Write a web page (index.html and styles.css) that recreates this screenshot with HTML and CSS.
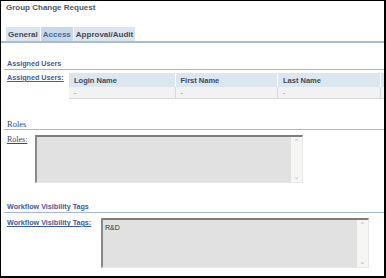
FILE: index.html
```html
<!DOCTYPE html>
<html>
<head>
<meta charset="utf-8">
<link rel="stylesheet" href="styles.css">
</head>
<body>
<div class="frame">
  <div class="title">Group Change Request</div>
  <div class="tabs">
    <div class="tab">General</div>
    <div class="tab active">Access</div>
    <div class="tab">Approval/Audit</div>
  </div>

  <div class="section-head sh-users">Assigned Users</div>
  <div class="row row-users">
    <a class="label">Assigned Users:</a>
    <table class="grid">
      <thead>
        <tr><th class="c1">Login Name</th><th class="c2">First Name</th><th class="c3">Last Name</th><th class="c4">Email</th></tr>
      </thead>
      <tbody>
        <tr><td>-</td><td>-</td><td>-</td><td>-</td></tr>
      </tbody>
    </table>
  </div>

  <div class="section-head serif sh-roles">Roles</div>
  <div class="row row-roles">
    <a class="label serif">Roles:</a>
    <div class="box box-roles">
      <div class="box-text"></div>
      <div class="scroll"><span class="arr">&#8963;</span><span class="arr">&#8964;</span></div>
    </div>
  </div>

  <div class="section-head sh-tags">Workflow Visibility Tags</div>
  <div class="row row-tags">
    <a class="label">Workflow Visibility Tags:</a>
    <div class="box box-tags">
      <div class="box-text">R&amp;D</div>
      <div class="scroll"><span class="arr">&#8963;</span><span class="arr">&#8964;</span></div>
    </div>
  </div>
</div>
</body>
</html>
```
FILE: styles.css
```css
html, body { margin: 0; padding: 0; background: #fff; }
.frame {
  width: 386px; height: 278px; box-sizing: border-box;
  border-style: solid; border-color: #000;
  border-width: 1px 2px 2px 1px;
  overflow: hidden;
  font-family: "Liberation Sans", Arial, sans-serif;
  font-size: 7.2px;
}
.title {
  margin: 1px 0 0 5px;
  height: 12px; line-height: 12px;
  font-weight: bold; font-size: 8px; color: #4e5866;
  white-space: nowrap;
}
.tabs {
  display: flex; gap: 1px;
  margin-top: 13px;
  padding-left: 5px;
  border-bottom: 2px solid #a9bccb;
}
.tab {
  height: 14px; line-height: 15px;
  padding: 0 2px;
  background: #dde5ec;
  color: #3d4b5a; font-weight: bold; font-size: 8px;
  white-space: nowrap;
}
.tab.active { background: #c7d9e8; color: #4468a0; }

.section-head {
  margin-left: 3px;
  padding-left: 3px;
  height: 10px; line-height: 10px;
  border-bottom: 1px solid #a6b6d3;
  color: #3d5c9c; font-weight: bold;
  white-space: nowrap;
}
.section-head.serif { font-family: "Liberation Serif", serif; font-weight: normal; color: #2f4a80; font-size: 8.5px; }
.sh-users { margin-top: 16px; }
.sh-roles { margin-top: 20px; }
.sh-tags { margin-top: 19px; }

.row { display: flex; align-items: flex-start; padding-left: 6px; }
.label {
  color: #3d5c9c; font-weight: bold; text-decoration: underline;
  line-height: 10px; white-space: nowrap;
}
.label.serif { font-family: "Liberation Serif", serif; font-weight: normal; color: #2f4a80; font-size: 8px; }
.row-users { margin-top: 3px; }
.row-users .label { width: 62px; flex: none; }
.grid { border-collapse: collapse; table-layout: fixed; flex: none; width: 420px; }
.grid th {
  height: 14px; padding: 0 0 0 5px; text-align: left;
  background: #dce6ef; color: #3d4b5a; font-weight: bold; font-size: 7.5px;
  border-right: 1px solid #fff; white-space: nowrap; overflow: hidden;
}
.grid td {
  height: 11px; padding: 0 0 0 5px; line-height: 11px;
  background: #f2f2f2; color: #888; font-size: 7px;
  border-right: 1px solid #d8d8d8; border-bottom: 1px solid #d8d8d8;
}
.grid .c1 { width: 99px; }
.grid .c2 { width: 95px; }
.grid .c3 { width: 96px; }
.grid .c4 { width: 100px; }

.row-roles { margin-top: 5px; }
.row-roles .label { width: 28px; flex: none; }
.row-tags { margin-top: 5px; }
.row-tags .label { width: 94px; flex: none; }

.box {
  display: flex; box-sizing: border-box;
  width: 268px;
  background: #e1e1e1;
  border-style: solid; border-width: 2px 1px 1px 2px;
  border-color: #7d7d7d #e8e8e8 #e8e8e8 #8a8a8a;
}
.box-roles { height: 48px; }
.box-tags { height: 50px; }
.box-text { flex: 1; padding: 4px 0 0 2px; font-size: 7px; color: #333; }
.scroll {
  width: 11px; flex: none;
  background: #f6f6f4;
  display: flex; flex-direction: column; justify-content: space-between; align-items: center;
  color: #b0b0b0; font-size: 7px; line-height: 10px;
  font-family: "DejaVu Sans", sans-serif;
}
.arr { display: block; }
```
